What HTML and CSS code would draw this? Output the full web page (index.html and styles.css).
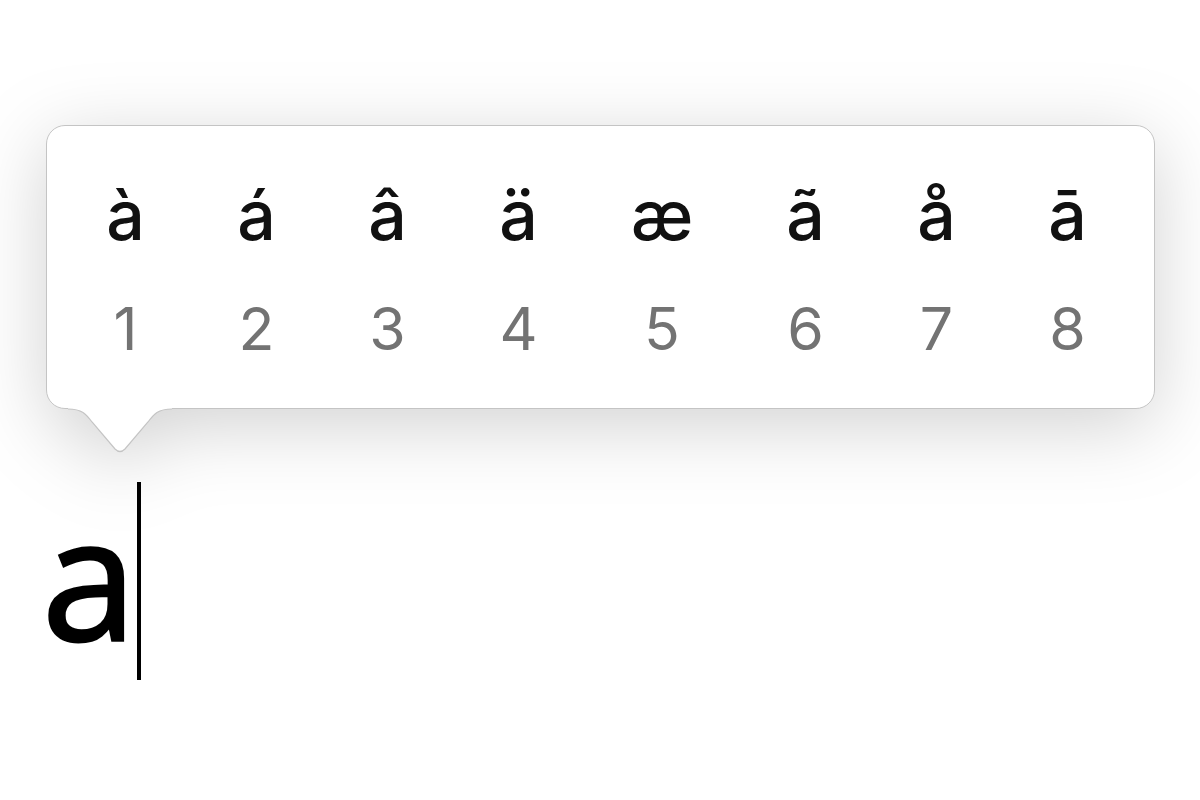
FILE: index.html
```html
<!DOCTYPE html>
<html lang="en">
<head>
<meta charset="utf-8">
<title>Accent menu</title>
<link rel="stylesheet" href="styles.css">
</head>
<body>
<div class="page">
  <div class="popover-wrap">
    <div class="popover">
      <div class="key"><span class="ch">à</span><span class="num">1</span></div>
      <div class="key"><span class="ch">á</span><span class="num">2</span></div>
      <div class="key"><span class="ch">â</span><span class="num">3</span></div>
      <div class="key"><span class="ch">ä</span><span class="num">4</span></div>
      <div class="key wide"><span class="ch">æ</span><span class="num">5</span></div>
      <div class="key"><span class="ch">ã</span><span class="num">6</span></div>
      <div class="key"><span class="ch">å</span><span class="num">7</span></div>
      <div class="key"><span class="ch">ā</span><span class="num">8</span></div>
    </div>
    <svg class="arrow" width="104" height="46" viewBox="0 0 104 46">
      <path class="arrow-fill" d="M0,0 L0,2 C14,2 18,7 24,15 L47,42 Q52,47 57,42 L80,15 C86,7 90,2 104,2 L104,0 Z"/>
      <path class="arrow-line" d="M0,2 C14,2 18,7 24,15 L47,42 Q52,47 57,42 L80,15 C86,7 90,2 104,2"/>
    </svg>
  </div>
  <div class="editor"><span class="typed">a</span><span class="caret"></span></div>
</div>
</body>
</html>
```
FILE: styles.css
```css
html, body {
  margin: 0;
  padding: 0;
  background: #ffffff;
}
.page {
  width: 1200px;
  height: 800px;
  padding: 125px 0 0 46px;
  box-sizing: border-box;
  overflow: hidden;
}
.popover-wrap {
  position: relative;
  width: 1109px;
  filter: drop-shadow(0 16px 38px rgba(0, 0, 0, 0.18));
}
.popover {
  box-sizing: border-box;
  width: 1109px;
  height: 284px;
  background: #ffffff;
  border: 1px solid #c4c4c4;
  border-radius: 19px;
  display: flex;
  padding: 55px 0 0 13px;
}
.key {
  width: 131px;
  display: flex;
  flex-direction: column;
  align-items: center;
}
.key.wide {
  width: 156px;
}
.ch {
  font-family: Inter, "Noto Sans", sans-serif;
  font-size: 68px;
  line-height: 68px;
  font-weight: 500;
  color: #111111;
}
.num {
  margin-top: 50px;
  font-family: Inter, "Noto Sans", sans-serif;
  font-size: 59px;
  line-height: 59px;
  font-weight: 400;
  color: #737373;
}
.arrow {
  position: absolute;
  left: 22px;
  top: 282px;
  display: block;
}
.arrow-fill {
  fill: #ffffff;
}
.arrow-line {
  fill: none;
  stroke: #c4c4c4;
  stroke-width: 1.2;
}
.editor {
  margin-top: 65px;
  margin-left: -4px;
  font-family: "Open Sans", sans-serif;
  font-size: 170px;
  line-height: 200px;
  font-weight: 400;
  color: #000000;
  -webkit-text-stroke: 3px #000000;
}
.caret {
  display: inline-block;
  width: 4px;
  height: 198px;
  margin-left: 1px;
  background: #000000;
  vertical-align: -40px;
}
```
